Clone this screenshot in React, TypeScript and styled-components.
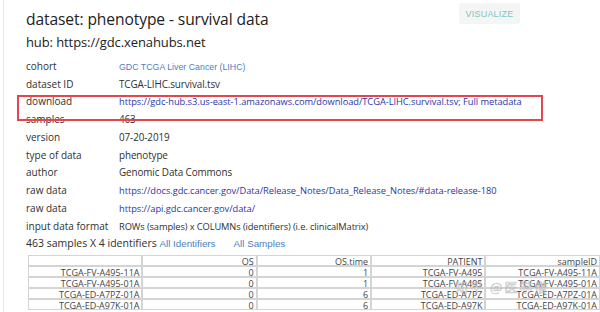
import styled, { createGlobalStyle } from 'styled-components';

const GlobalStyle = createGlobalStyle`
    html, body {
        margin: 0;
        padding: 0;
        background: #ffffff;
    }
    body {
        font-family: "Open Sans", "Noto Sans", sans-serif;
        color: #333333;
    }
`;

const Page = styled.div`
    position: relative;
    width: 600px;
    height: 312px;
    overflow: hidden;
`;

const Frame = styled.div`
    margin-left: 3px;
    height: 100%;
    border-left: 1px solid #e6e6e6;
    padding-left: 22px;
`;

const Header = styled.div`
    display: flex;
    justify-content: space-between;
    align-items: flex-start;
    width: 494px;
    padding-top: 3px;
`;

const Title = styled.h2`
    margin: 5px 0 0;
    font-size: 15.6px;
    line-height: 22px;
    font-weight: 400;
    letter-spacing: -0.1px;
    color: #222222;
    white-space: nowrap;
`;

const VisualizeBtn = styled.button`
    width: 61px;
    height: 21px;
    padding: 0;
    border: none;
    border-radius: 2px;
    background: #f4f5f5;
    color: #7ec6be;
    font-family: "Liberation Sans", Arial, sans-serif;
    font-size: 9px;
    letter-spacing: 0.2px;
`;

const Hub = styled.h3`
    margin: 3px 0 0;
    font-size: 13px;
    line-height: 18px;
    font-weight: 400;
    letter-spacing: -0.1px;
    color: #222222;
`;

const Meta = styled.div`
    margin-top: 4.5px;
`;

const Row = styled.div<{ $tall?: boolean }>`
    height: ${p => (p.$tall ? '20px' : '17.75px')};
    line-height: ${p => (p.$tall ? '20px' : '17.75px')};
    font-size: 10px;
    white-space: nowrap;
    color: #2f2f2f;
`;

const Label = styled.span`
    display: inline-block;
    width: 93px;
`;

const Value = styled.span<{ $narrow?: boolean }>`
    font-size: ${p => (p.$narrow ? '9.3px' : '9.9px')};
    letter-spacing: -0.1px;
`;

const Link = styled.a<{ $light?: boolean }>`
    text-decoration: none;
    color: ${p => (p.$light ? '#4d80c2' : '#2b35a8')};
    font-size: 9.3px;
    letter-spacing: -0.05px;
    ${p => p.$light && `
        font-family: "Liberation Sans", Arial, sans-serif;
        font-size: 8.8px;
        letter-spacing: 0;
    `}
`;

const Summary = styled.div`
    height: 17.75px;
    line-height: 17.75px;
    font-size: 10.5px;
    white-space: nowrap;
    color: #2f2f2f;
`;

const TabLink = styled.a<{ $gap?: number }>`
    margin-left: ${p => p.$gap || 0}px;
    text-decoration: none;
    color: #4d80c2;
    font-family: "Liberation Sans", Arial, sans-serif;
    font-size: 9.8px;
`;

const Table = styled.table`
    margin: 2px 0 0 2px;
    border-collapse: separate;
    border-spacing: 0;
    table-layout: fixed;
    font-size: 9px;
    color: #444444;
`;

const Cell = styled.td`
    width: 110.6px;
    padding: 1.5px 2px 0 0;
    line-height: 7.6px;
    border: 1px solid #d4d4d4;
    text-align: right;
    white-space: nowrap;
    background: #ffffff;
`;

const Highlight = styled.div`
    position: absolute;
    left: 17px;
    top: 95px;
    width: 522px;
    height: 22px;
    border: 2px solid #e4464f;
    pointer-events: none;
`;

const Watermark = styled.span`
    position: absolute;
    left: 455px;
    top: 277px;
    font-family: "Noto Sans CJK SC", sans-serif;
    font-size: 13px;
    letter-spacing: 2px;
    color: rgba(255, 255, 255, 0.55);
    -webkit-text-stroke: 0.6px rgba(140, 140, 140, 0.5);
    pointer-events: none;
`;

type Entry = { label: string; value: string; link?: boolean; narrow?: boolean };

const rest: Entry[] = [
    { label: 'samples', value: '463' },
    { label: 'version', value: '07-20-2019' },
    { label: 'type of data', value: 'phenotype' },
    { label: 'author', value: 'Genomic Data Commons' },
    { label: 'raw data', value: 'https://docs.gdc.cancer.gov/Data/Release_Notes/Data_Release_Notes/#data-release-180', link: true },
    { label: 'raw data', value: 'https://api.gdc.cancer.gov/data/', link: true },
    { label: 'input data format', value: 'ROWs (samples) x COLUMNs (identifiers) (i.e. clinicalMatrix)', narrow: true },
];

const header = ['', 'OS', 'OS.time', 'PATIENT', 'sampleID'];
const rows = [
    ['TCGA-FV-A495-11A', '0', '1', 'TCGA-FV-A495', 'TCGA-FV-A495-11A'],
    ['TCGA-FV-A495-01A', '0', '1', 'TCGA-FV-A495', 'TCGA-FV-A495-01A'],
    ['TCGA-ED-A7PZ-01A', '0', '6', 'TCGA-ED-A7PZ', 'TCGA-ED-A7PZ-01A'],
    ['TCGA-ED-A97K-01A', '0', '6', 'TCGA-ED-A97K', 'TCGA-ED-A97K-01A'],
];

const renderRow = (e: Entry, i: number) => (
    <Row key={e.label + i}>
        <Label>{e.label}</Label>
        {e.link ? <Link href="#">{e.value}</Link> : <Value $narrow={e.narrow}>{e.value}</Value>}
    </Row>
);

const App = () => {
  return (
    <Page>
        <GlobalStyle />
        <Frame>
            <Header>
                <Title>dataset: phenotype - survival data</Title>
                <VisualizeBtn>VISUALIZE</VisualizeBtn>
            </Header>
            <Hub>hub: https://gdc.xenahubs.net</Hub>
            <Meta>
                <Row $tall>
                    <Label>cohort</Label>
                    <Link $light href="#">GDC TCGA Liver Cancer (LIHC)</Link>
                </Row>
                <Row>
                    <Label>dataset ID</Label>
                    <Value>TCGA-LIHC.survival.tsv</Value>
                </Row>
                <Row>
                    <Label>download</Label>
                    <Link href="#">https://gdc-hub.s3.us-east-1.amazonaws.com/download/TCGA-LIHC.survival.tsv</Link>
                    <Link href="#">; Full metadata</Link>
                </Row>
                {rest.map(renderRow)}
            </Meta>
            <Summary>
                463 samples X 4 identifiers <TabLink href="#">All Identifiers</TabLink>
                <TabLink href="#" $gap={18}>All Samples</TabLink>
            </Summary>
            <Table>
                <tbody>
                    <tr>
                        {header.map((h, i) => <Cell key={i}>{h}</Cell>)}
                    </tr>
                    {rows.map((r, i) => (
                        <tr key={i}>
                            {r.map((c, j) => <Cell key={j}>{c}</Cell>)}
                        </tr>
                    ))}
                </tbody>
            </Table>
        </Frame>
        <Highlight />
        <Watermark>知乎 @医学僧</Watermark>
    </Page>
  );
}

export default App;
